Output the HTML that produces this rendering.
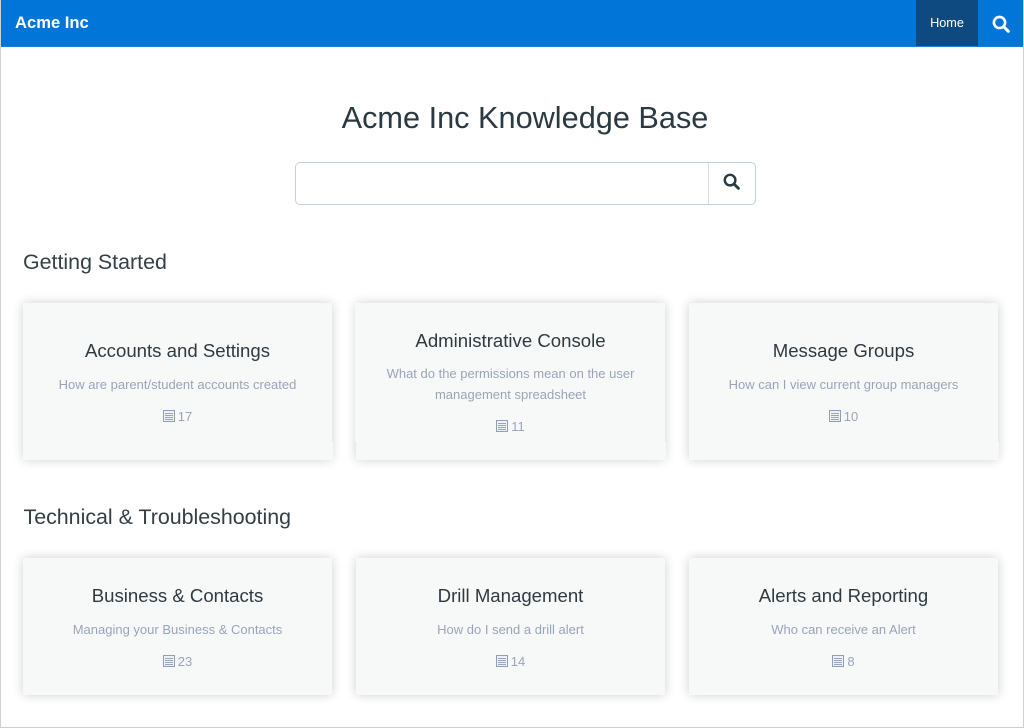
<!DOCTYPE html>
<html><head><meta charset="utf-8"><title>Acme Inc Knowledge Base</title>
<style>
*{box-sizing:border-box}
html,body{margin:0;padding:0;width:1024px;height:728px;overflow:hidden;background:#fff}
body{font-family:"Liberation Sans",sans-serif;position:relative;color:#2f3a40}
.frame{position:absolute;left:0;top:0;width:1024px;height:728px;border:1px solid #d0d0d0;border-top:0;pointer-events:none;z-index:5}
.nav{position:absolute;left:0;top:0;width:1024px;height:47px;background:#0275d8;border-bottom:1px solid #1a80d8}
.brand{position:absolute;left:15px;top:13px;font-size:16.6px;line-height:20px;font-weight:bold;color:#fff}
.home{position:absolute;left:916px;top:0;width:62px;height:46px;background:#0e4a80;color:#fff;font-size:12.7px;line-height:46px;text-align:center}
.abs{position:absolute;white-space:nowrap}
h1{position:absolute;left:0;width:1050px;top:99px;margin:0;text-align:center;font-size:30.7px;line-height:38px;font-weight:normal;color:#2b3a42}
.search{position:absolute;left:295px;top:162px;width:461px;height:43px;border:1px solid #c5d0dc;border-radius:5px;background:#fff}
.search i{position:absolute;left:412px;top:0;width:1px;height:41px;background:#d8dce0}
h2{position:absolute;margin:0;font-size:21.4px;line-height:26px;font-weight:normal;color:#333f45;white-space:nowrap}
.card{position:absolute;width:309px;background:#f7f9f9;box-shadow:0 0 10px rgba(0,0,0,.19);text-align:center}
.t{position:absolute;left:0;right:0;font-size:18.6px;line-height:22px;color:#2f3a40}
.d{position:absolute;left:0;right:0;font-size:13px;line-height:21px;color:#9aa4b8}
.c{position:absolute;left:0;right:0;font-size:13px;line-height:16px;color:#9aa4b8}
.c svg{vertical-align:-1px;margin-right:3px}
.r{position:absolute;right:-1px;top:139px;width:1px;height:18px;background:#f7f9f9}
.l{position:absolute;left:-1px;top:0;width:1px;height:139px;background:#f7f9f9}
</style></head><body>
<div class="nav">
<div class="brand">Acme Inc</div>
<div class="home">Home</div>
<svg class="abs" style="left:992px;top:14.5px" width="18" height="18" viewBox="0 0 18 18"><circle cx="7.5" cy="7.5" r="5.6" fill="none" stroke="#fff" stroke-width="2.6"/><path d="M11.7 11.7L16.3 16.3" stroke="#fff" stroke-width="3" stroke-linecap="round"/></svg>
</div>
<h1>Acme Inc Knowledge Base</h1>
<div class="search"><i></i>
<svg class="abs" style="left:427px;top:10px" width="17" height="17" viewBox="0 0 18 18"><circle cx="7.5" cy="7.5" r="5.6" fill="none" stroke="#2b3a42" stroke-width="2.6"/><path d="M11.7 11.7L16.3 16.3" stroke="#2b3a42" stroke-width="3" stroke-linecap="round"/></svg>
</div>
<h2 style="left:23px;top:249px">Getting Started</h2>
<h2 style="left:23.5px;top:504px">Technical &amp; Troubleshooting</h2>

<div class="card" style="left:23px;top:303px;height:157px"><span class="r"></span>
<div class="t" style="top:37px">Accounts and Settings</div>
<div class="d" style="top:71px">How are parent/student accounts created</div>
<div class="c" style="top:106px"><svg width="12" height="12" viewBox="0 0 12 12"><path d="M.5.5h11v11H.5z" fill="#eef1f6" stroke="#8f9eb8"/><path d="M2 3.5h8M2 5.5h8M2 7.5h8M2 9.5h8" stroke="#98a5bc"/></svg>17</div>
</div>
<div class="card" style="left:356px;top:303px;height:157px"><span class="l"></span><span class="r"></span>
<div class="t" style="top:27px">Administrative Console</div>
<div class="d" style="top:60px">What do the permissions mean on the user<br>management spreadsheet</div>
<div class="c" style="top:116px"><svg width="12" height="12" viewBox="0 0 12 12"><path d="M.5.5h11v11H.5z" fill="#eef1f6" stroke="#8f9eb8"/><path d="M2 3.5h8M2 5.5h8M2 7.5h8M2 9.5h8" stroke="#98a5bc"/></svg>11</div>
</div>
<div class="card" style="left:689px;top:303px;height:157px"><span class="r"></span>
<div class="t" style="top:37px">Message Groups</div>
<div class="d" style="top:71px">How can I view current group managers</div>
<div class="c" style="top:106px"><svg width="12" height="12" viewBox="0 0 12 12"><path d="M.5.5h11v11H.5z" fill="#eef1f6" stroke="#8f9eb8"/><path d="M2 3.5h8M2 5.5h8M2 7.5h8M2 9.5h8" stroke="#98a5bc"/></svg>10</div>
</div>

<div class="card" style="left:23px;top:558px;height:137px">
<div class="t" style="top:27px">Business &amp; Contacts</div>
<div class="d" style="top:61px">Managing your Business &amp; Contacts</div>
<div class="c" style="top:96px"><svg width="12" height="12" viewBox="0 0 12 12"><path d="M.5.5h11v11H.5z" fill="#eef1f6" stroke="#8f9eb8"/><path d="M2 3.5h8M2 5.5h8M2 7.5h8M2 9.5h8" stroke="#98a5bc"/></svg>23</div>
</div>
<div class="card" style="left:356px;top:558px;height:137px">
<div class="t" style="top:27px">Drill Management</div>
<div class="d" style="top:61px">How do I send a drill alert</div>
<div class="c" style="top:96px"><svg width="12" height="12" viewBox="0 0 12 12"><path d="M.5.5h11v11H.5z" fill="#eef1f6" stroke="#8f9eb8"/><path d="M2 3.5h8M2 5.5h8M2 7.5h8M2 9.5h8" stroke="#98a5bc"/></svg>14</div>
</div>
<div class="card" style="left:689px;top:558px;height:137px">
<div class="t" style="top:27px">Alerts and Reporting</div>
<div class="d" style="top:61px">Who can receive an Alert</div>
<div class="c" style="top:96px"><svg width="12" height="12" viewBox="0 0 12 12"><path d="M.5.5h11v11H.5z" fill="#eef1f6" stroke="#8f9eb8"/><path d="M2 3.5h8M2 5.5h8M2 7.5h8M2 9.5h8" stroke="#98a5bc"/></svg>8</div>
</div>
<div class="frame"></div>
</body></html>
